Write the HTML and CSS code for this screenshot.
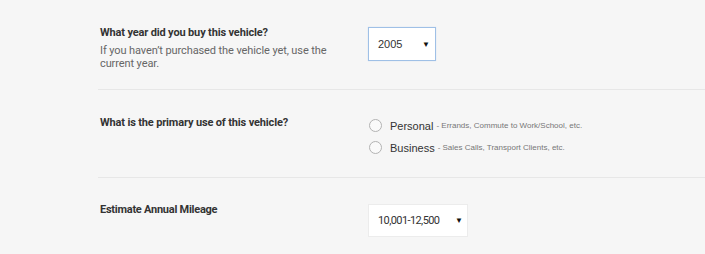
FILE: index.html
```html
<!DOCTYPE html>
<html>
<head>
<meta charset="utf-8">
<link rel="stylesheet" href="styles.css">
</head>
<body>
<div class="form">
  <div class="row row-year">
    <div class="label-col">
      <div class="q">What year did you buy this vehicle?</div>
      <div class="hint">If you haven’t purchased the vehicle yet, use the current year.</div>
    </div>
    <div class="field-col">
      <div class="select select-focus select-year"><span>2005</span><span class="caret">▼</span></div>
    </div>
  </div>
  <div class="row row-use">
    <div class="label-col">
      <div class="q">What is the primary use of this vehicle?</div>
    </div>
    <div class="field-col">
      <div class="radios">
        <label class="radio"><span class="circle"></span><span class="opt">Personal</span><span class="desc">- Errands, Commute to Work/School, etc.</span></label>
        <label class="radio"><span class="circle"></span><span class="opt">Business</span><span class="desc">- Sales Calls, Transport Clients, etc.</span></label>
      </div>
    </div>
  </div>
  <div class="row row-mileage">
    <div class="label-col">
      <div class="q q-mileage">Estimate Annual Mileage</div>
    </div>
    <div class="field-col">
      <div class="select select-mileage"><span>10,001-12,500</span><span class="caret">▼</span></div>
    </div>
  </div>
</div>
</body>
</html>
```

FILE: styles.css
```css
html, body {
  margin: 0;
  padding: 0;
  background: #f6f6f6;
  font-family: Roboto, "Liberation Sans", Arial, sans-serif;
  overflow: hidden;
}
.form {
  margin-left: 98px;
}
.row {
  display: flex;
  border-top: 1px solid #e7e7e7;
  box-sizing: border-box;
  padding-top: 26px;
}
.row-year { height: 90px; margin-top: -1px; }
.row-use { height: 88px; }
.row-mileage { height: 76px; padding-top: 25px; }
.label-col {
  width: 270px;
  padding-left: 2px;
  box-sizing: border-box;
}
.q {
  font-size: 11px;
  font-weight: 700;
  color: #333;
  line-height: 13px;
  letter-spacing: -0.15px;
}
.q-mileage {
  letter-spacing: -0.25px;
}
.hint {
  margin-top: 5px;
  font-size: 11px;
  line-height: 13px;
  color: #666;
  width: 240px;
  letter-spacing: -0.1px;
}
.field-col {
  flex: 1;
}
.select {
  display: flex;
  align-items: center;
  justify-content: space-between;
  box-sizing: border-box;
  background: #fff;
  font-family: "Liberation Sans", Arial, sans-serif;
  font-size: 11px;
  color: #333;
}
.select-year {
  width: 68px;
  height: 34px;
  border: 1px solid #9fc0e6;
  box-shadow: 0 0 1px #c9dcf2;
  padding: 0 5px 0 9px;
  margin-top: 1px;
}
.select-mileage {
  width: 100px;
  height: 33px;
  border: 1px solid #ececec;
  padding: 0 4px 0 9px;
  margin-top: 1px;
  font-family: Roboto, "Liberation Sans", sans-serif;
  font-size: 11px;
  letter-spacing: -0.6px;
}
.caret {
  font-size: 8px;
  color: #111;
  letter-spacing: 0;
}
.radios {
  display: flex;
  flex-direction: column;
  gap: 9px;
  padding-top: 3px;
}
.radio {
  display: flex;
  align-items: center;
  height: 13px;
  font-family: "Liberation Sans", Arial, sans-serif;
}
.circle {
  width: 11px;
  height: 11px;
  border: 1px solid #b3b3b3;
  border-radius: 50%;
  background: #fafafa;
  margin-left: 1px;
  margin-right: 8px;
}
.opt {
  font-size: 11px;
  color: #333;
  margin-right: 3px;
}
.desc {
  font-size: 8px;
  color: #777;
}
```
